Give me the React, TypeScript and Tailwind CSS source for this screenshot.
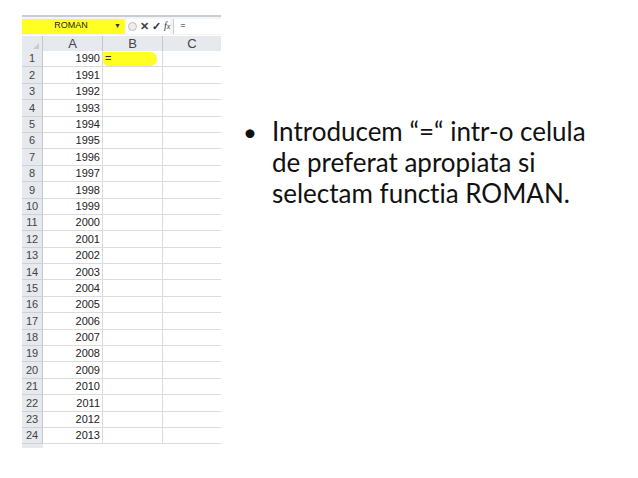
import React from "react";

const years = Array.from({ length: 24 }, (_, i) => 1990 + i);

const Sheet = () => {
  return (
    <div className="w-[199px] flex flex-col font-['Liberation_Sans',sans-serif] text-[11px] text-[#222]">
      {/* formula bar */}
      <div className="h-[20px] flex items-center border-t-2 border-[#c9ccd1] bg-[#f3f4f6]">
        <div className="w-[103px] h-[15px] bg-[#ffff22] flex items-center">
          <span className="flex-1 text-center text-[9px] pl-[6px]">ROMAN</span>
          <span className="text-[7px] pr-[4px] text-[#333]">▼</span>
        </div>
        <div className="flex items-center gap-[3px] pl-[3px] h-[15px] bg-white">
          <span className="w-[9px] h-[9px] rounded-full border border-[#bbb] bg-[#eee]" />
          <span className="text-[11px] font-bold text-[#444] leading-none">✕</span>
          <span className="text-[11px] font-bold text-[#333] leading-none">✓</span>
          <span className="text-[10px] italic font-['Liberation_Serif',serif] text-[#333] leading-none">
            f<span className="text-[8px]">x</span>
          </span>
        </div>
        <div className="flex-1 h-[15px] ml-[3px] bg-white border-l border-[#ccc] flex items-center pl-[6px] text-[9px]">
          =
        </div>
      </div>
      {/* column header */}
      <div className="h-[15px] mt-[1px] flex bg-[#e6e9ee] text-[#444] text-[13px] leading-none">
        <div className="w-[21px] border-r border-[#c5c9cf] flex items-end justify-end pr-[3px] pb-[2px]">
          <span className="w-0 h-0 border-l-[6px] border-l-transparent border-b-[6px] border-b-[#c8ccd2]" />
        </div>
        <div className="w-[60px] border-r border-[#c5c9cf] flex items-center justify-center">A</div>
        <div className="w-[60px] border-r border-[#c5c9cf] flex items-center justify-center">B</div>
        <div className="flex-1 flex items-center justify-center">C</div>
      </div>
      {years.map((y, i) => (
        <div key={y} className="h-[16.4px] flex">
          <div className="w-[21px] bg-[#e6e9ee] border-b border-[#cdd1d6] border-r border-r-[#c5c9cf] flex items-center justify-center text-[11px] text-[#444]">
            {i + 1}
          </div>
          <div className="w-[60px] border-b border-r border-[#dcdcdc] flex items-center justify-end pr-[2px] text-[11px]">
            {y}
          </div>
          <div className="w-[60px] border-b border-r border-[#dcdcdc] flex items-center">
            {i === 0 && (
              <div className="w-[54px] h-[14px] bg-[#ffff22] rounded-r-[8px] rounded-bl-[6px] flex items-center pl-[2px] text-[11px] text-[#333]">
                =
              </div>
            )}
          </div>
          <div className="flex-1 border-b border-[#dcdcdc]" />
        </div>
      ))}
      <div className="h-[4px] w-[21px] bg-[#e6e9ee]" />
    </div>
  );
};

export default function App() {
  return (
    <div className="w-[638px] h-[478px] bg-white flex overflow-hidden">
      <div className="pl-[22px] pt-[15px]">
        <Sheet />
      </div>
      <div className="pl-[22px] pt-[116px] flex font-['Lato',sans-serif] text-[26px] leading-[31px] text-[#111] [font-variant-ligatures:none]">
        <span className="w-[29px] shrink-0 text-[24px]">•</span>
        <p className="w-[335px]">
          Introducem “=“ intr-o celula de preferat apropiata si selectam functia ROMAN.
        </p>
      </div>
    </div>
  );
}
